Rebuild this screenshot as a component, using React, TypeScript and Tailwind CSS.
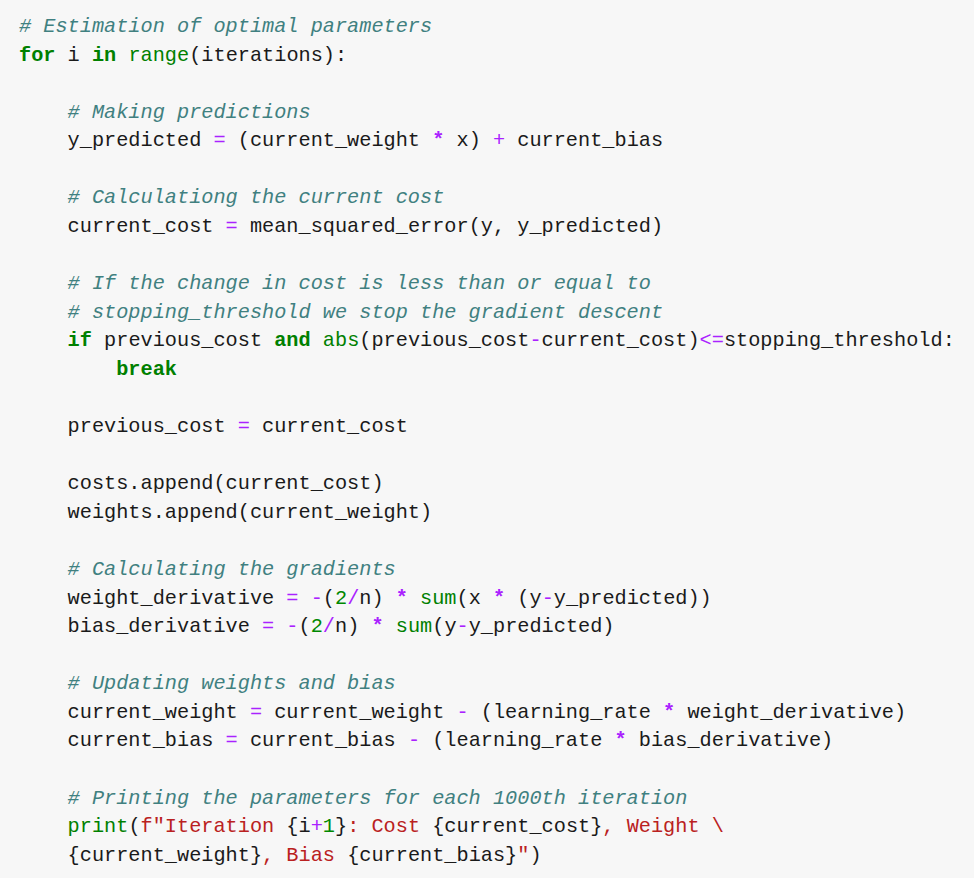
import React from 'react'

type Kind = 't' | 'k' | 'b' | 'o' | 'n' | 's' | 'c' | 'm'
type Token = [Kind, string]

const kindClass: Record<Kind, string> = {
  t: 'text-[#1a1a1a]',
  k: 'text-[#008000] font-bold',
  b: 'text-[#008000]',
  o: 'text-[#aa22ff]',
  m: 'text-[#aa22ff] font-bold',
  n: 'text-[#008800]',
  s: 'text-[#ba2121]',
  c: 'text-[#408080] italic',
}

const I = '    '

const lines: Token[][] = [
  [['c', '# Estimation of optimal parameters']],
  [['k', 'for'], ['t', ' i '], ['k', 'in'], ['t', ' '], ['b', 'range'], ['t', '(iterations):']],
  [],
  [['t', I], ['c', '# Making predictions']],
  [['t', I + 'y_predicted '], ['o', '='], ['t', ' (current_weight '], ['m', '*'], ['t', ' x) '], ['o', '+'], ['t', ' current_bias']],
  [],
  [['t', I], ['c', '# Calculationg the current cost']],
  [['t', I + 'current_cost '], ['o', '='], ['t', ' mean_squared_error(y, y_predicted)']],
  [],
  [['t', I], ['c', '# If the change in cost is less than or equal to']],
  [['t', I], ['c', '# stopping_threshold we stop the gradient descent']],
  [
    ['t', I],
    ['k', 'if'],
    ['t', ' previous_cost '],
    ['k', 'and'],
    ['t', ' '],
    ['b', 'abs'],
    ['t', '(previous_cost'],
    ['o', '-'],
    ['t', 'current_cost)'],
    ['o', '<='],
    ['t', 'stopping_threshold:'],
  ],
  [['t', I + I], ['k', 'break']],
  [],
  [['t', I + 'previous_cost '], ['o', '='], ['t', ' current_cost']],
  [],
  [['t', I + 'costs.append(current_cost)']],
  [['t', I + 'weights.append(current_weight)']],
  [],
  [['t', I], ['c', '# Calculating the gradients']],
  [
    ['t', I + 'weight_derivative '],
    ['o', '='],
    ['t', ' '],
    ['o', '-'],
    ['t', '('],
    ['n', '2'],
    ['o', '/'],
    ['t', 'n) '],
    ['m', '*'],
    ['t', ' '],
    ['b', 'sum'],
    ['t', '(x '],
    ['m', '*'],
    ['t', ' (y'],
    ['o', '-'],
    ['t', 'y_predicted))'],
  ],
  [
    ['t', I + 'bias_derivative '],
    ['o', '='],
    ['t', ' '],
    ['o', '-'],
    ['t', '('],
    ['n', '2'],
    ['o', '/'],
    ['t', 'n) '],
    ['m', '*'],
    ['t', ' '],
    ['b', 'sum'],
    ['t', '(y'],
    ['o', '-'],
    ['t', 'y_predicted)'],
  ],
  [],
  [['t', I], ['c', '# Updating weights and bias']],
  [
    ['t', I + 'current_weight '],
    ['o', '='],
    ['t', ' current_weight '],
    ['o', '-'],
    ['t', ' (learning_rate '],
    ['m', '*'],
    ['t', ' weight_derivative)'],
  ],
  [
    ['t', I + 'current_bias '],
    ['o', '='],
    ['t', ' current_bias '],
    ['o', '-'],
    ['t', ' (learning_rate '],
    ['m', '*'],
    ['t', ' bias_derivative)'],
  ],
  [],
  [['t', I], ['c', '# Printing the parameters for each 1000th iteration']],
  [
    ['t', I],
    ['b', 'print'],
    ['t', '('],
    ['s', 'f"Iteration '],
    ['t', '{i'],
    ['o', '+'],
    ['n', '1'],
    ['t', '}'],
    ['s', ': Cost '],
    ['t', '{current_cost}'],
    ['s', ', Weight \\'],
  ],
  [['t', I + '{current_weight}'], ['s', ', Bias '], ['t', '{current_bias}'], ['s', '"'], ['t', ')']],
]

export default function App() {
  return (
    <div className="w-[975px] h-[878px] bg-white">
      <div className="w-[974px] h-[878px] bg-[#f7f7f7] pl-[19px] pt-[13px] font-['Liberation_Mono',monospace] text-[20.25px] leading-[28.58px]">
        {lines.map((tokens, i) => (
          <div key={i} className="whitespace-pre h-[28.58px]">
            {tokens.map(([kind, text], j) => (
              <span key={j} className={kindClass[kind]}>
                {text}
              </span>
            ))}
          </div>
        ))}
      </div>
    </div>
  )
}
